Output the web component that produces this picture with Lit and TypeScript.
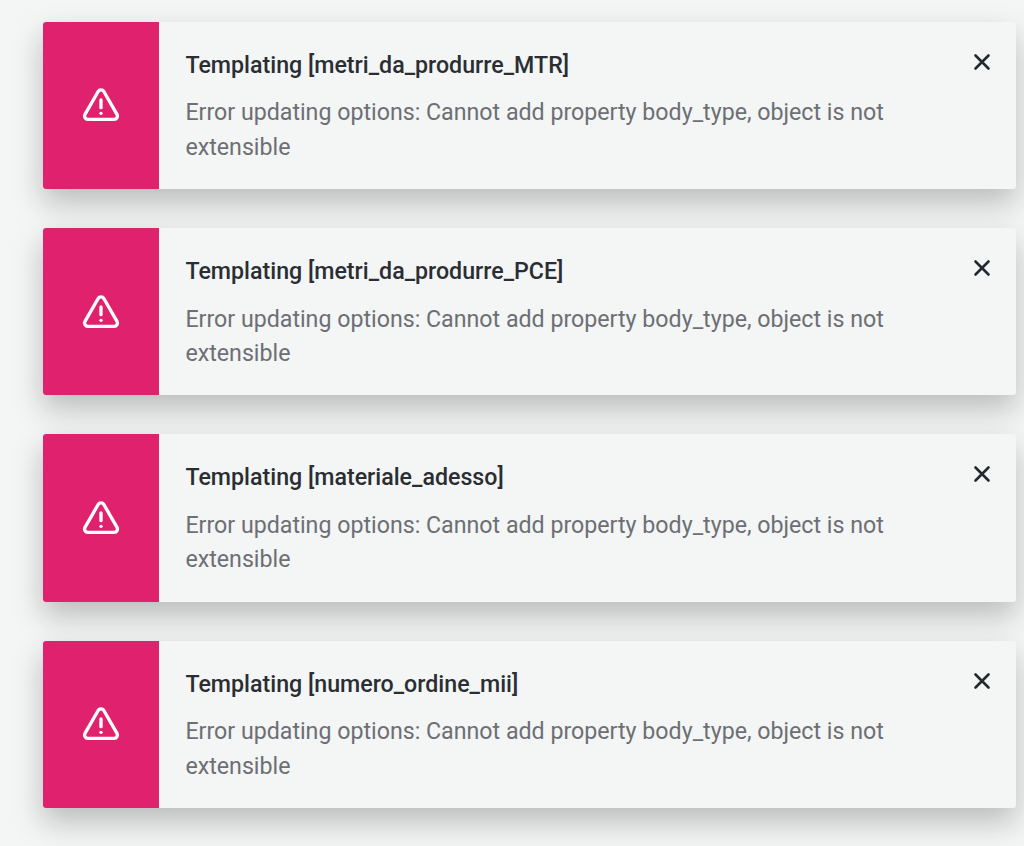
import { LitElement, css, html } from "lit";
import { customElement } from "lit/decorators.js";

const TITLES = [
  "Templating [metri_da_produrre_MTR]",
  "Templating [metri_da_produrre_PCE]",
  "Templating [materiale_adesso]",
  "Templating [numero_ordine_mii]",
];

const MESSAGE = "Error updating options: Cannot add property body_type, object is not extensible";

@customElement("app-root")
export class AppRoot extends LitElement {
  static styles = css`
    :host {
      display: block;
      min-height: 846px;
      background: #f4f5f5;
      font-family: Roboto, "Liberation Sans", sans-serif;
      overflow: hidden;
    }

    .stack {
      display: flex;
      flex-direction: column;
      gap: 39.13px;
      padding: 21.8px 8px 0 42.6px;
    }

    .alert {
      display: flex;
      height: 167.2px;
      background: #f4f5f5;
      border-radius: 3px;
      box-shadow: 0 14px 30px rgba(24, 26, 27, 0.26);
    }

    .icon {
      flex: 0 0 116.8px;
      display: flex;
      align-items: center;
      justify-content: center;
      background: #e0226e;
      border-radius: 3px 0 0 3px;
    }

    .icon svg {
      width: 40px;
      height: 40px;
      fill: none;
      stroke: #fff;
      stroke-width: 2;
      stroke-linecap: round;
      stroke-linejoin: round;
    }

    .body {
      flex: 1;
      padding: 27px 60px 0 26px;
    }

    .title {
      font-size: 23.2px;
      font-weight: 500;
      line-height: 32px;
      color: #2a2e33;
    }

    .message {
      margin-top: 14.4px;
      font-size: 23.2px;
      line-height: 34.4px;
      color: #6c6f74;
    }

    .close {
      flex: 0 0 auto;
      align-self: flex-start;
      margin: 30px 24px 0 0;
      padding: 0;
      border: 0;
      background: none;
      display: flex;
    }

    .close svg {
      width: 20px;
      height: 20px;
      fill: none;
      stroke: #24292e;
      stroke-width: 2.6;
      stroke-linecap: round;
    }
  `;

  render() {
    return html`
      <div class="stack">
        ${TITLES.map(
          (title) => html`
            <div class="alert">
              <div class="icon">
                <svg viewBox="0 0 24 24">
                  <path d="M10.3 3.9 2.4 17.6A2 2 0 0 0 4.1 20.6h15.8a2 2 0 0 0 1.7-3L13.7 3.9a2 2 0 0 0-3.4 0Z" />
                  <path d="M12 9v4.6" />
                  <path d="M12 17h.01" />
                </svg>
              </div>
              <div class="body">
                <div class="title">${title}</div>
                <div class="message">${MESSAGE}</div>
              </div>
              <button class="close">
                <svg viewBox="0 0 20 20"><path d="M3.5 3.5 16.5 16.5M16.5 3.5 3.5 16.5" /></svg>
              </button>
            </div>
          `
        )}
      </div>
    `;
  }
}
